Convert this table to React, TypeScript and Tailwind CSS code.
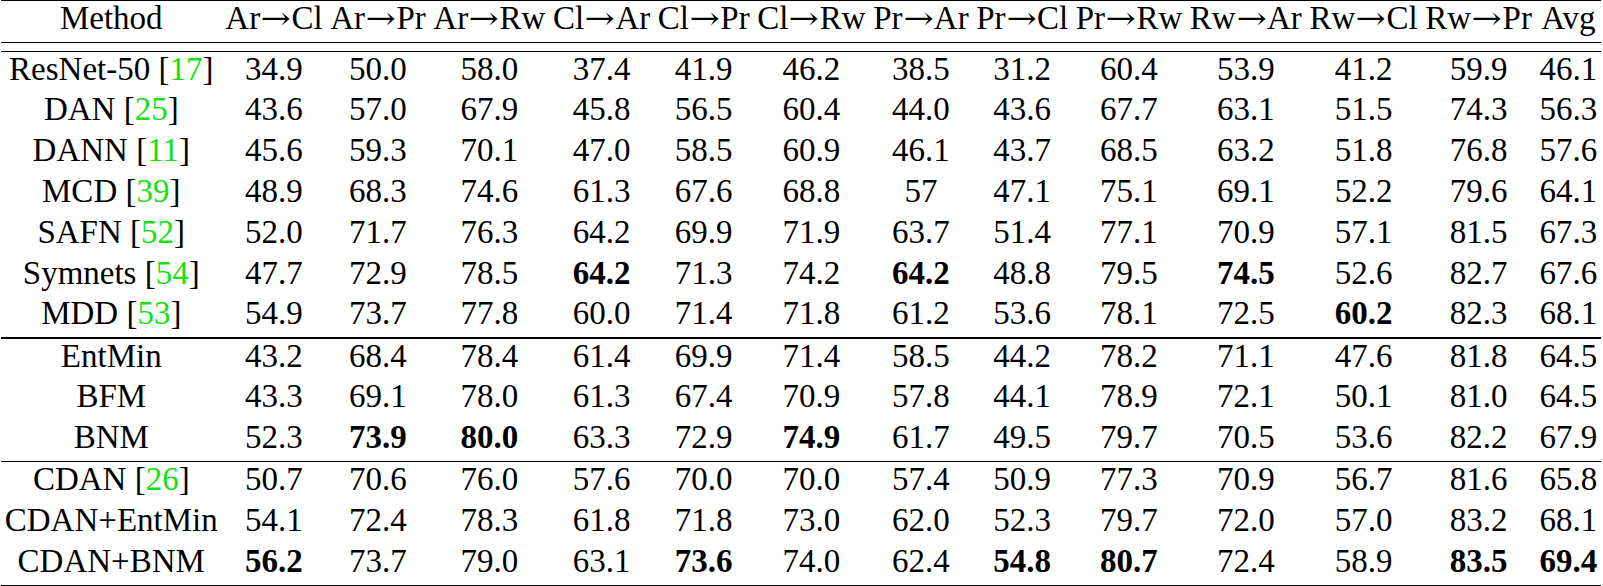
const heads = [
  ["Ar", "Cl"],
  ["Ar", "Pr"],
  ["Ar", "Rw"],
  ["Cl", "Ar"],
  ["Cl", "Pr"],
  ["Cl", "Rw"],
  ["Pr", "Ar"],
  ["Pr", "Cl"],
  ["Pr", "Rw"],
  ["Rw", "Ar"],
  ["Rw", "Cl"],
  ["Rw", "Pr"],
];

type Row = { name: string; cite?: string; vals: string };

// "*" marks a bold (best) value
const groups: Row[][] = [
  [
    { name: "ResNet-50", cite: "17", vals: "34.9 50.0 58.0 37.4 41.9 46.2 38.5 31.2 60.4 53.9 41.2 59.9 46.1" },
    { name: "DAN", cite: "25", vals: "43.6 57.0 67.9 45.8 56.5 60.4 44.0 43.6 67.7 63.1 51.5 74.3 56.3" },
    { name: "DANN", cite: "11", vals: "45.6 59.3 70.1 47.0 58.5 60.9 46.1 43.7 68.5 63.2 51.8 76.8 57.6" },
    { name: "MCD", cite: "39", vals: "48.9 68.3 74.6 61.3 67.6 68.8 57 47.1 75.1 69.1 52.2 79.6 64.1" },
    { name: "SAFN", cite: "52", vals: "52.0 71.7 76.3 64.2 69.9 71.9 63.7 51.4 77.1 70.9 57.1 81.5 67.3" },
    { name: "Symnets", cite: "54", vals: "47.7 72.9 78.5 *64.2 71.3 74.2 *64.2 48.8 79.5 *74.5 52.6 82.7 67.6" },
    { name: "MDD", cite: "53", vals: "54.9 73.7 77.8 60.0 71.4 71.8 61.2 53.6 78.1 72.5 *60.2 82.3 68.1" },
  ],
  [
    { name: "EntMin", vals: "43.2 68.4 78.4 61.4 69.9 71.4 58.5 44.2 78.2 71.1 47.6 81.8 64.5" },
    { name: "BFM", vals: "43.3 69.1 78.0 61.3 67.4 70.9 57.8 44.1 78.9 72.1 50.1 81.0 64.5" },
    { name: "BNM", vals: "52.3 *73.9 *80.0 63.3 72.9 *74.9 61.7 49.5 79.7 70.5 53.6 82.2 67.9" },
  ],
  [
    { name: "CDAN", cite: "26", vals: "50.7 70.6 76.0 57.6 70.0 70.0 57.4 50.9 77.3 70.9 56.7 81.6 65.8" },
    { name: "CDAN+EntMin", vals: "54.1 72.4 78.3 61.8 71.8 73.0 62.0 52.3 79.7 72.0 57.0 83.2 68.1" },
    { name: "CDAN+BNM", vals: "*56.2 73.7 79.0 63.1 *73.6 74.0 62.4 *54.8 *80.7 72.4 58.9 *83.5 *69.4" },
  ],
];

const cell = "h-[40.8px] text-center leading-[35px] whitespace-nowrap";

function Rule() {
  return <div className="col-span-14 h-[1.4px] bg-black" />;
}

export default function App() {
  return (
    <div className="h-[586px] w-[1603px] bg-white font-['Liberation_Serif',serif] text-[33px] text-black">
      <div className="ml-[1px] grid w-[1600px] grid-cols-[repeat(14,auto)]">
        <Rule />
        <div className={cell}>Method</div>
        {heads.map(([a, b]) => (
          <div key={a + b} className={cell}>
            {a}
            <span className="inline-block w-[1em] scale-x-[1.15] text-center font-['DejaVu_Serif',serif] text-[0.95em] font-light">
              →
            </span>
            {b}
          </div>
        ))}
        <div className={cell}>Avg</div>
        <div className="col-span-14 h-[9.5px] border-y-[1.4px] border-black" />
        {groups.map((rows, gi) => (
          <div key={gi} className="contents">
            {gi > 0 && <Rule />}
            {rows.map((r) => (
              <div key={r.name} className="contents">
                <div className={cell}>
                  {r.name}
                  {r.cite && (
                    <>
                      {" "}[<span className="text-[#14e014]">{r.cite}</span>]
                    </>
                  )}
                </div>
                {r.vals.split(" ").map((v, i) => (
                  <div key={i} className={v.startsWith("*") ? cell + " font-bold" : cell}>
                    {v.replace("*", "")}
                  </div>
                ))}
              </div>
            ))}
          </div>
        ))}
        <Rule />
      </div>
    </div>
  );
}
